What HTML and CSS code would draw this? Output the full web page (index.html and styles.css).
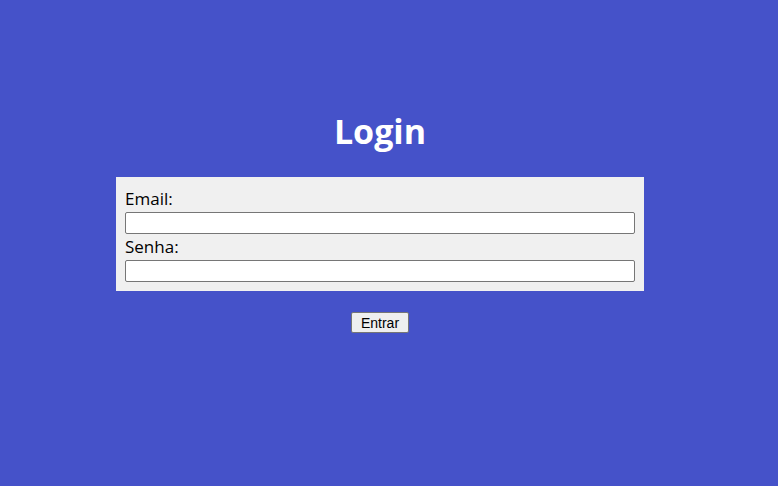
FILE: index.html
```html
<!DOCTYPE html>
<html lang="pt-BR">
<head>
    <meta charset="UTF-8">
    <meta name="viewport" content="width=device-width, initial-scale=1.0">
    <title>Login</title>
    <link rel="stylesheet" href="styles.css">
</head>
<body>
    <div class="page">
        <h1>Login</h1>
        <form id="loginForm" class="login-form">
            <div class="form-box">
                <label for="email">Email:</label>
                <input type="email" id="email" class="text-input">
                <label for="senha">Senha:</label>
                <input type="password" id="senha" class="text-input">
            </div>
            <div class="actions">
                <button type="submit" class="submit-button">Entrar</button>
            </div>
        </form>
    </div>
</body>
</html>
```

FILE: styles.css
```css
:root {
    --background: #4552c9;
    --box-background: #f0f0f0;
    --text-dark: #000000;
}

body {
    background-color: var(--background);
    font-family: "Open Sans", "Noto Sans", sans-serif;
    margin: 0;
    min-height: 100vh;
}

.page {
    width: 760px;
    padding-top: 108px;
}

h1 {
    color: #ffffff;
    font-size: 34px;
    font-weight: 700;
    text-align: center;
    line-height: 46px;
    margin: 0 0 23px 0;
}

.form-box {
    background-color: var(--box-background);
    width: 510px;
    margin: 0 auto;
    padding: 9px;
}

.form-box label {
    display: block;
    color: var(--text-dark);
    font-size: 17px;
    line-height: 26px;
}

.text-input {
    display: block;
    box-sizing: border-box;
    width: 100%;
    height: 22px;
    margin: 0;
    border: 1px solid #767676;
    border-radius: 2px;
    background: #ffffff;
}

.actions {
    display: flex;
    justify-content: center;
    margin-top: 21px;
}

.submit-button {
    font-family: "Liberation Sans", Arial, sans-serif;
    font-size: 14px;
    height: 21px;
    padding: 0 9px;
    border: 1px solid #767676;
    border-radius: 2px;
    background-color: #efefef;
    color: #000000;
}
```
